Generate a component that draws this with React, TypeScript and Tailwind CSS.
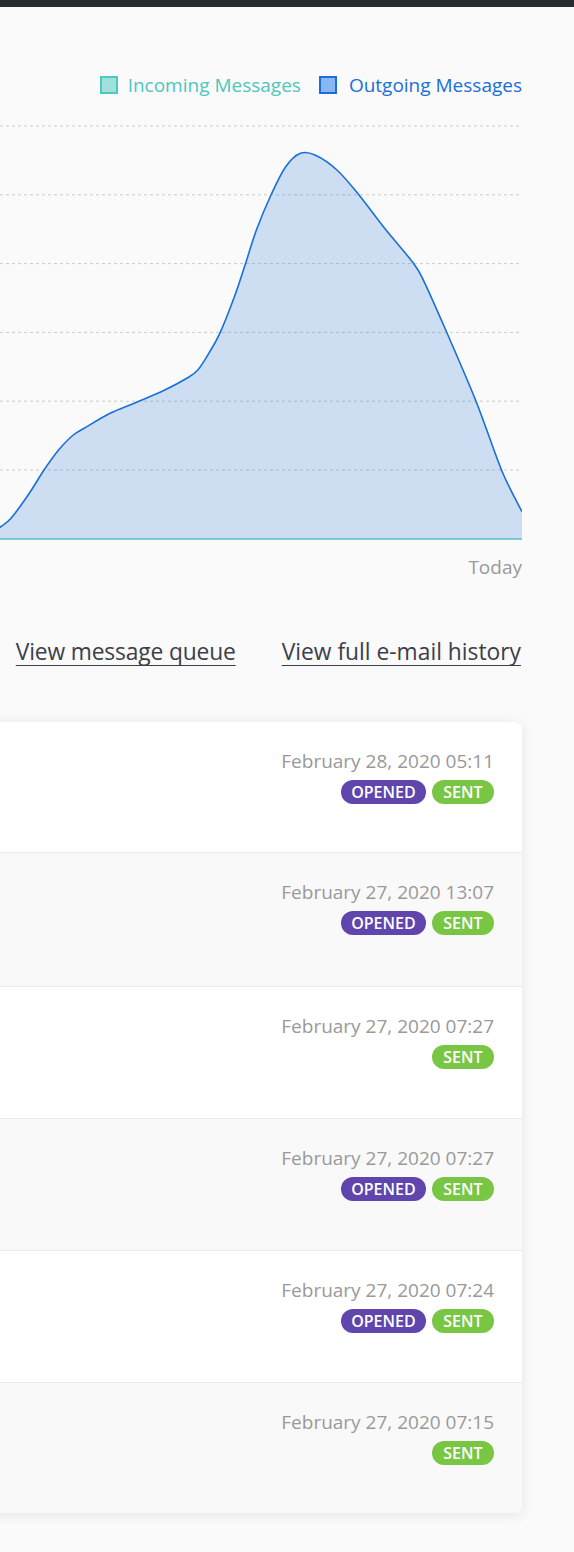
import React from 'react';

type Row = { date: string; opened: boolean; h: string; bg: string; last?: boolean };

const rows: Row[] = [
  { date: 'February 28, 2020 05:11', opened: true, h: 'h-[131px]', bg: 'bg-white' },
  { date: 'February 27, 2020 13:07', opened: true, h: 'h-[134px]', bg: 'bg-[#f9f9f9]' },
  { date: 'February 27, 2020 07:27', opened: false, h: 'h-[132px]', bg: 'bg-white' },
  { date: 'February 27, 2020 07:27', opened: true, h: 'h-[132px]', bg: 'bg-[#f9f9f9]' },
  { date: 'February 27, 2020 07:24', opened: true, h: 'h-[132px]', bg: 'bg-white' },
  { date: 'February 27, 2020 07:15', opened: false, h: 'h-[130px]', bg: 'bg-[#f9f9f9]', last: true },
];

// traced outline of the outgoing series (page coords, chart top = 120)
const samples: [number, number][] = [
  [-10, 535], [0, 527.3], [11, 518.3], [29.3, 493.3], [44, 470], [58.6, 450], [73.3, 435], [84.2, 428.3],
  [110, 413.3], [135.5, 402.7], [164.8, 390], [186.8, 378.3], [197.8, 370], [208.8, 353.3],
  [219.8, 333.3], [234.4, 296.7], [245.4, 264], [256.4, 230], [271, 195], [285.7, 166.7],
  [300.4, 153.3], [315, 155], [337, 170], [359, 195], [384.6, 228.3], [414, 264], [424.9, 283.3],
  [446.9, 332.7], [476.2, 401.7], [501.8, 470.7], [522, 511.7],
];

const pts = samples.map(([x, y]) => [x, y - 120] as [number, number]);

function smoothPath(p: [number, number][]) {
  let d = `M${p[0][0]},${p[0][1]}`;
  for (let i = 0; i < p.length - 1; i++) {
    const p0 = p[i - 1] || p[i];
    const p1 = p[i];
    const p2 = p[i + 1];
    const p3 = p[i + 2] || p2;
    const c1x = p1[0] + (p2[0] - p0[0]) / 6;
    const c1y = p1[1] + (p2[1] - p0[1]) / 6;
    const c2x = p2[0] - (p3[0] - p1[0]) / 6;
    const c2y = p2[1] - (p3[1] - p1[1]) / 6;
    d += ` C${c1x.toFixed(1)},${c1y.toFixed(1)} ${c2x.toFixed(1)},${c2y.toFixed(1)} ${p2[0]},${p2[1]}`;
  }
  return d;
}

const linePath = smoothPath(pts);
const areaPath = `${linePath} L522,419 L-10,419 Z`;
const gridYs = [6, 74.8, 143.6, 212.4, 281.2, 350];

const Chart = () => (
  <svg width={522} height={426} viewBox="0 0 522 426" className="block overflow-hidden">
    {gridYs.map((y) => (
      <line key={y} x1={0} x2={522} y1={y} y2={y} stroke="#cccccc" strokeWidth={1} strokeDasharray="3 3" />
    ))}
    <path d={areaPath} fill="rgba(26,111,214,0.2)" />
    <path d={linePath} fill="none" stroke="#1a6fd6" strokeWidth={1.6} />
    <line x1={0} x2={522} y1={419} y2={419} stroke="#56bfc6" strokeWidth={1.5} />
  </svg>
);

const Badge = ({ label, color, pad }: { label: string; color: string; pad: string }) => (
  <span className={`inline-flex h-6 items-center rounded-full text-[16px] font-semibold leading-none text-white ${pad} ${color}`}>
    {label}
  </span>
);

export default function App() {
  return (
    <div className="min-h-[1552px] overflow-hidden bg-[#fafafa] font-['Open_Sans',sans-serif]">
      <div className="h-[7px] bg-[#292c31]" />
      <div className="pr-[52px]">
        <div className="mt-[65px] flex h-[26px] items-center justify-end gap-[18px] text-[19px]">
          <div className="flex items-center gap-2.5 text-[#4fc6be]">
            <span className="h-[18px] w-[18px] border-2 border-[#4ec9c0] bg-[#a0e1dc]" />
            Incoming Messages
          </div>
          <div className="flex items-center gap-3 text-[#1a6fd6]">
            <span className="h-[18px] w-[18px] border-2 border-[#1a6fd6] bg-[#8ab7f3]" />
            Outgoing Messages
          </div>
        </div>

        <div className="mt-[22px]">
          <Chart />
        </div>

        <div className="mt-[9px] text-right text-[19px] leading-6 text-[#999999]">Today</div>

        <div className="mt-[58px] flex justify-end gap-[46px] pr-px text-[22.8px] leading-[30px] text-[#3b4048]">
          <a className="tracking-[-0.15px] underline underline-offset-[5px] decoration-1">View message queue</a>
          <a className="underline underline-offset-[5px] decoration-1">View full e-mail history</a>
        </div>

        <div className="-ml-6 mt-[55px] overflow-hidden rounded-lg shadow-[0_2px_14px_rgba(0,0,0,0.09)]">
          {rows.map((r, i) => (
            <div
              key={i}
              className={`flex flex-col items-end pr-7 pt-[27px] ${r.h} ${r.bg} ${r.last ? '' : 'border-b border-[#e6eaee]'}`}
            >
              <div className="text-[19px] leading-6 text-[#999999]">{r.date}</div>
              <div className="mt-[7px] flex gap-1.5">
                {r.opened && <Badge label="OPENED" color="bg-[#6045ad]" pad="px-2.5" />}
                <Badge label="SENT" color="bg-[#79c644]" pad="px-[11.5px]" />
              </div>
            </div>
          ))}
        </div>
      </div>
    </div>
  );
}
